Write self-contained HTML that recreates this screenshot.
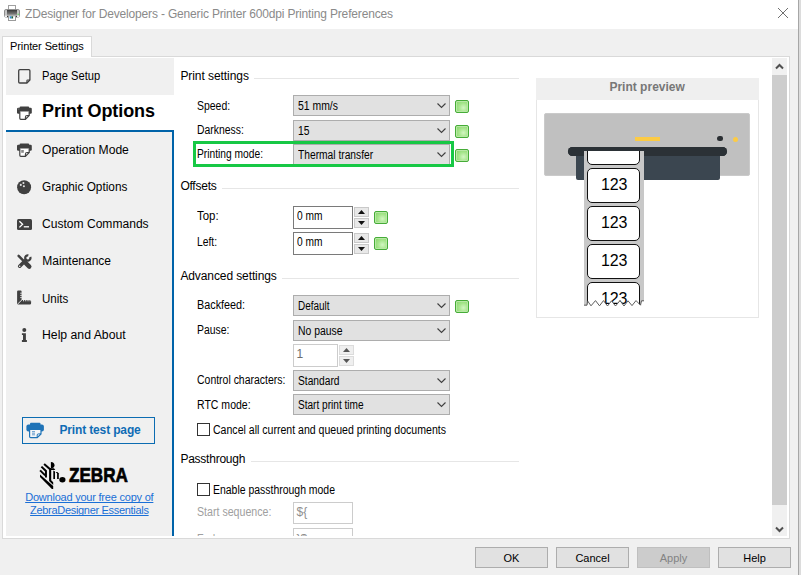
<!DOCTYPE html><html><head><meta charset="utf-8"><style>
html,body{margin:0;padding:0}
body{width:801px;height:575px;overflow:hidden;position:relative;background:#f0f0f0;font-family:"Liberation Sans",sans-serif}
.t{position:absolute;white-space:nowrap;line-height:1;font-family:"Liberation Sans",sans-serif}
svg{position:absolute;overflow:visible}
</style></head><body>
<div style="position:absolute;left:0px;top:0px;width:801px;height:29px;background:#fff"></div>
<div class="t" style="left:25.00px;top:8px;font-size:12px;color:#8a8a8a;letter-spacing:-0.167px;">ZDesigner for Developers - Generic Printer 600dpi Printing Preferences</div>
<svg style="left:4px;top:5px" width="16" height="16" viewBox="0 0 16 16">
<defs><linearGradient id="pg" x1="0" y1="0" x2="0" y2="1"><stop offset="0" stop-color="#3a3a3a"/><stop offset="1" stop-color="#858585"/></linearGradient></defs>
<rect x="4.5" y="0.5" width="7" height="5" fill="#fff" stroke="#a0a0a0"/>
<rect x="0.5" y="4.6" width="15" height="7.6" rx="1.3" fill="#c4c4c4" stroke="#8c8c8c"/>
<rect x="3" y="5" width="10" height="4.8" fill="url(#pg)"/>
<rect x="13.6" y="8.7" width="1.3" height="1.3" fill="#6be06b"/>
<rect x="0.8" y="10.6" width="14.4" height="1.8" fill="#f4f4f4"/>
<rect x="4.5" y="10.8" width="7" height="4.7" fill="#fff" stroke="#9a9a9a"/>
<rect x="5.7" y="11.3" width="1.8" height="2.2" fill="#2a8ad8"/><rect x="7.5" y="11.3" width="1.6" height="2.2" fill="#1e5e3a"/>
<rect x="3" y="10.7" width="0.9" height="1.4" fill="#222"/><rect x="12.1" y="10.7" width="0.9" height="1.4" fill="#222"/>
</svg>
<svg style="left:777px;top:7px" width="12" height="12" viewBox="0 0 12 12"><path d="M1 1L11 11M11 1L1 11" stroke="#707070" stroke-width="1"/></svg>
<div style="position:absolute;left:798px;top:0px;width:1px;height:575px;background:#a6a6a6"></div>
<div style="position:absolute;left:799px;top:0px;width:2px;height:575px;background:#dcdcdc"></div>
<div style="position:absolute;left:2px;top:36px;width:88px;height:20px;background:#fff;border:1px solid #d9d9d9;border-bottom:none"></div>
<div style="position:absolute;left:2px;top:56px;width:786px;height:481px;background:#fff;border:1px solid #d9d9d9"></div>
<div style="position:absolute;left:3px;top:56px;width:88px;height:1px;background:#fff"></div>
<div class="t" style="left:10.00px;top:41px;font-size:11px;color:#000;letter-spacing:-0.103px;">Printer Settings</div>
<div style="position:absolute;left:6px;top:58px;width:168px;height:37px;background:#f0f0f0"></div>
<div style="position:absolute;left:6px;top:130px;width:166px;height:404px;background:#f0f0f0;border-top:2px solid #0063a9;border-right:2px solid #0063a9"></div>
<div class="t" style="left:42.30px;top:70px;font-size:12px;color:#000;transform:scaleX(0.9275);transform-origin:0 0;">Page Setup</div>
<div class="t" style="left:42.30px;top:144px;font-size:12px;color:#000;transform:scaleX(1.0093);transform-origin:0 0;">Operation Mode</div>
<div class="t" style="left:42.30px;top:181px;font-size:12px;color:#000;transform:scaleX(0.9844);transform-origin:0 0;">Graphic Options</div>
<div class="t" style="left:42.30px;top:218px;font-size:12px;color:#000;transform:scaleX(1.0057);transform-origin:0 0;">Custom Commands</div>
<div class="t" style="left:42.30px;top:255px;font-size:12px;color:#000;">Maintenance</div>
<div class="t" style="left:42.30px;top:293px;font-size:12px;color:#000;transform:scaleX(0.9644);transform-origin:0 0;">Units</div>
<div class="t" style="left:42.30px;top:329px;font-size:12px;color:#000;transform:scaleX(1.0192);transform-origin:0 0;">Help and About</div>
<div class="t" style="left:42.00px;top:102px;font-size:18px;color:#000;font-weight:bold;letter-spacing:-0.083px;">Print Options</div>
<svg style="left:16px;top:68px" width="16" height="16" viewBox="0 0 16 16" fill="none" stroke="#404040" stroke-width="1.4">
<path d="M2.7 2.7 Q2.7 1.6 3.8 1.6 H12.8 Q13.9 1.6 13.9 2.7 V12 L10.9 15 H3.8 Q2.7 15 2.7 13.9 Z" stroke-width="1.3"/>
<path d="M10.9 15 V12.8 Q10.9 12 11.7 12 H13.9" stroke-width="1.1"/></svg>
<svg style="left:16px;top:104px" width="17" height="17" viewBox="0 0 17 17">
<rect x="3.6" y="2.4" width="9.6" height="2.4" rx="1" fill="#404040"/>
<rect x="1" y="3.8" width="14.8" height="5.9" rx="1.2" fill="#404040"/>
<path d="M3.8 7.6 V14.3 Q3.8 15.3 4.8 15.3 H9.4 L13.2 11.5 V7.6" fill="#fff" stroke="#404040" stroke-width="1.2"/>
<path d="M9.4 15.3 V13.2 Q9.4 11.5 11.1 11.5 H13.2" fill="none" stroke="#404040" stroke-width="1.1"/>
<rect x="1.8" y="4.6" width="1.6" height="0.9" fill="#7a7a7a"/>
</svg>
<svg style="left:16px;top:141px" width="17" height="17" viewBox="0 0 17 17">
<rect x="3.6" y="2.4" width="9.6" height="2.4" rx="1" fill="#404040"/>
<rect x="1" y="3.8" width="14.8" height="5.9" rx="1.2" fill="#404040"/>
<path d="M3.8 7.6 V14.3 Q3.8 15.3 4.8 15.3 H9.4 L13.2 11.5 V7.6" fill="#fff" stroke="#404040" stroke-width="1.2"/>
<path d="M9.4 15.3 V13.2 Q9.4 11.5 11.1 11.5 H13.2" fill="none" stroke="#404040" stroke-width="1.1"/>
<rect x="5.2" y="9" width="2.6" height="2.8" fill="#8a8a8a"/>
</svg>
<svg style="left:16px;top:179px" width="16" height="16" viewBox="0 0 16 16"><circle cx="8.1" cy="8.3" r="7" fill="#404040"/><circle cx="7.4" cy="4.0" r="1.05" fill="#fff" opacity="0.85"/><circle cx="4.8" cy="5.9" r="1.05" fill="#fff" opacity="0.85"/><circle cx="7.9" cy="7.2" r="1.05" fill="#fff" opacity="0.85"/></svg>
<svg style="left:16px;top:218px" width="17" height="13" viewBox="0 0 17 13"><rect x="1" y="1" width="15" height="11" rx="1.5" fill="#404040"/><path d="M3.4 3.2 L6.6 6.3 L3.4 9.4" fill="none" stroke="#fff" stroke-width="1.3"/><path d="M7.8 8.8 H13" stroke="#fff" stroke-width="1.3"/></svg>
<svg style="left:16px;top:253px" width="17" height="17" viewBox="0 0 17 17" fill="none" stroke="#404040">
<path d="M2.6 2.9 L8.8 9.1" stroke-width="2.5" stroke-linecap="round"/>
<path d="M9.8 10.1 L13.3 13.6" stroke-width="4.4" stroke-linecap="round"/>
<path d="M3.7 13.2 L8.9 8.0" stroke-width="3.6" stroke-linecap="round"/>
<path d="M14.21 4.03 A2.6 2.6 0 1 1 12.34 2.46" stroke-width="2.3"/>
<circle cx="3.7" cy="13.2" r="0.75" fill="#f0f0f0" stroke="none"/>
</svg>
<svg style="left:16px;top:289px" width="17" height="17" viewBox="0 0 17 17">
<path d="M1.1 2.6 Q1.1 1.5 2.2 1.5 H4.6 Q5.6 1.5 5.6 2.5 V11 H14.2 Q15.1 11 15.1 11.9 V14.2 Q15.1 15.4 13.9 15.4 H2.3 Q1.1 15.4 1.1 14.2 Z" fill="#404040"/>
<path d="M5.8 4.2 L4.3 4.2 M5.8 6.4 L4.3 6.4 M5.8 8.6 L4.3 8.6 M7.6 10.8 V12.3 M9.8 10.8 V12.3 M12 10.8 V12.3 M14.1 10.8 V12.3" stroke="#f0f0f0" stroke-width="1"/>
<path d="M1.5 15.2 L6.2 10.6" stroke="#f0f0f0" stroke-width="0.9"/>
</svg>
<svg style="left:16px;top:326px" width="17" height="17" viewBox="0 0 17 17">
<circle cx="8.3" cy="4.1" r="2.0" fill="#404040"/>
<path d="M5.9 7.2 H9.9 V14 H10.9 V16 H5.9 V14 H7 V9 H5.9 Z" fill="#404040"/>
</svg>
<div style="position:absolute;left:174px;top:57px;width:598px;height:479px;overflow:hidden"><div style="position:absolute;left:-174px;top:-57px;width:801px;height:575px">
<div class="t" style="left:180.40px;top:70px;font-size:12px;color:#000;letter-spacing:-0.067px;">Print settings</div>
<div style="position:absolute;left:254px;top:78px;width:265px;height:1px;background:#e6e6e6"></div>
<div class="t" style="left:180.40px;top:180px;font-size:12px;color:#000;letter-spacing:-0.242px;">Offsets</div>
<div style="position:absolute;left:222px;top:188px;width:297px;height:1px;background:#e6e6e6"></div>
<div class="t" style="left:180.40px;top:270px;font-size:12px;color:#000;letter-spacing:-0.102px;">Advanced settings</div>
<div style="position:absolute;left:282px;top:278px;width:237px;height:1px;background:#e6e6e6"></div>
<div class="t" style="left:180.40px;top:453px;font-size:12px;color:#000;letter-spacing:-0.237px;">Passthrough</div>
<div style="position:absolute;left:251px;top:461px;width:268px;height:1px;background:#e6e6e6"></div>
<div class="t" style="left:197.30px;top:100px;font-size:12px;color:#000;transform:scaleX(0.8711);transform-origin:0 0;">Speed:</div>
<div style="position:absolute;left:293px;top:95px;width:155px;height:19px;background:#e1e1e1;border:1px solid #adadad"></div>
<div class="t" style="left:297.50px;top:100px;font-size:12px;color:#000;transform:scaleX(0.8674);transform-origin:0 0;">51 mm/s</div>
<svg style="left:437px;top:103px" width="9" height="6" viewBox="0 0 9 6"><path d="M0.5 0.5L4.5 4.5L8.5 0.5" fill="none" stroke="#404040" stroke-width="1.1"/></svg>
<div style="position:absolute;left:455px;top:100px;width:12px;height:11px;border:1px solid #46ac38;border-radius:2px;background:radial-gradient(circle at 62% 62%,#d2f6c2 0,#a6e58c 45%,#7fd361 100%);box-shadow:inset 0 0 0 1px #b8e8a6"></div>
<div class="t" style="left:197.30px;top:124px;font-size:12px;color:#000;transform:scaleX(0.8667);transform-origin:0 0;">Darkness:</div>
<div style="position:absolute;left:293px;top:120px;width:155px;height:19px;background:#e1e1e1;border:1px solid #adadad"></div>
<div class="t" style="left:297.50px;top:125px;font-size:12px;color:#000;transform:scaleX(0.8598);transform-origin:0 0;">15</div>
<svg style="left:437px;top:128px" width="9" height="6" viewBox="0 0 9 6"><path d="M0.5 0.5L4.5 4.5L8.5 0.5" fill="none" stroke="#404040" stroke-width="1.1"/></svg>
<div style="position:absolute;left:455px;top:125px;width:12px;height:11px;border:1px solid #46ac38;border-radius:2px;background:radial-gradient(circle at 62% 62%,#d2f6c2 0,#a6e58c 45%,#7fd361 100%);box-shadow:inset 0 0 0 1px #b8e8a6"></div>
<div class="t" style="left:197.30px;top:148px;font-size:12px;color:#000;transform:scaleX(0.8530);transform-origin:0 0;">Printing mode:</div>
<div style="position:absolute;left:293px;top:144px;width:155px;height:19px;background:#e1e1e1;border:1px solid #adadad"></div>
<div class="t" style="left:297.50px;top:149px;font-size:12px;color:#000;transform:scaleX(0.8534);transform-origin:0 0;">Thermal transfer</div>
<svg style="left:437px;top:152px" width="9" height="6" viewBox="0 0 9 6"><path d="M0.5 0.5L4.5 4.5L8.5 0.5" fill="none" stroke="#404040" stroke-width="1.1"/></svg>
<div style="position:absolute;left:455px;top:149px;width:12px;height:11px;border:1px solid #46ac38;border-radius:2px;background:radial-gradient(circle at 62% 62%,#d2f6c2 0,#a6e58c 45%,#7fd361 100%);box-shadow:inset 0 0 0 1px #b8e8a6"></div>
<div style="position:absolute;left:193px;top:141px;width:255px;height:20px;border:3px solid #17c845"></div>
<div class="t" style="left:197.30px;top:210px;font-size:12px;color:#000;transform:scaleX(0.9503);transform-origin:0 0;">Top:</div>
<div style="position:absolute;left:293px;top:206px;width:58px;height:21px;background:#fff;border:1px solid #7a7a7a"></div>
<div class="t" style="left:296.50px;top:210px;font-size:12px;color:#000;transform:scaleX(0.8500);transform-origin:0 0;">0 mm</div>
<div style="position:absolute;left:354px;top:207px;width:15px;height:10px;background:#e8e8e8;border:1px solid #c9c9c9;box-sizing:border-box"></div>
<div style="position:absolute;left:354px;top:218px;width:15px;height:10px;background:#e8e8e8;border:1px solid #c9c9c9;box-sizing:border-box"></div>
<svg style="left:358px;top:210px" width="7" height="4" viewBox="0 0 7 4"><path d="M0 4L3.5 0L7 4Z" fill="#111"/></svg>
<svg style="left:358px;top:221px" width="7" height="4" viewBox="0 0 7 4"><path d="M0 0L3.5 4L7 0Z" fill="#111"/></svg>
<div style="position:absolute;left:374px;top:211px;width:12px;height:11px;border:1px solid #46ac38;border-radius:2px;background:radial-gradient(circle at 62% 62%,#d2f6c2 0,#a6e58c 45%,#7fd361 100%);box-shadow:inset 0 0 0 1px #b8e8a6"></div>
<div class="t" style="left:197.30px;top:236px;font-size:12px;color:#000;transform:scaleX(0.8599);transform-origin:0 0;">Left:</div>
<div style="position:absolute;left:293px;top:232px;width:58px;height:21px;background:#fff;border:1px solid #7a7a7a"></div>
<div class="t" style="left:296.50px;top:236px;font-size:12px;color:#000;transform:scaleX(0.8500);transform-origin:0 0;">0 mm</div>
<div style="position:absolute;left:354px;top:233px;width:15px;height:10px;background:#e8e8e8;border:1px solid #c9c9c9;box-sizing:border-box"></div>
<div style="position:absolute;left:354px;top:244px;width:15px;height:10px;background:#e8e8e8;border:1px solid #c9c9c9;box-sizing:border-box"></div>
<svg style="left:358px;top:236px" width="7" height="4" viewBox="0 0 7 4"><path d="M0 4L3.5 0L7 4Z" fill="#111"/></svg>
<svg style="left:358px;top:247px" width="7" height="4" viewBox="0 0 7 4"><path d="M0 0L3.5 4L7 0Z" fill="#111"/></svg>
<div style="position:absolute;left:374px;top:237px;width:12px;height:11px;border:1px solid #46ac38;border-radius:2px;background:radial-gradient(circle at 62% 62%,#d2f6c2 0,#a6e58c 45%,#7fd361 100%);box-shadow:inset 0 0 0 1px #b8e8a6"></div>
<div class="t" style="left:197.30px;top:299px;font-size:12px;color:#000;transform:scaleX(0.9012);transform-origin:0 0;">Backfeed:</div>
<div style="position:absolute;left:293px;top:295px;width:155px;height:19px;background:#e1e1e1;border:1px solid #adadad"></div>
<div class="t" style="left:297.50px;top:300px;font-size:12px;color:#000;transform:scaleX(0.8289);transform-origin:0 0;">Default</div>
<svg style="left:437px;top:303px" width="9" height="6" viewBox="0 0 9 6"><path d="M0.5 0.5L4.5 4.5L8.5 0.5" fill="none" stroke="#404040" stroke-width="1.1"/></svg>
<div style="position:absolute;left:455px;top:300px;width:12px;height:11px;border:1px solid #46ac38;border-radius:2px;background:radial-gradient(circle at 62% 62%,#d2f6c2 0,#a6e58c 45%,#7fd361 100%);box-shadow:inset 0 0 0 1px #b8e8a6"></div>
<div class="t" style="left:197.30px;top:324px;font-size:12px;color:#000;transform:scaleX(0.8669);transform-origin:0 0;">Pause:</div>
<div style="position:absolute;left:293px;top:320px;width:155px;height:19px;background:#e1e1e1;border:1px solid #adadad"></div>
<div class="t" style="left:297.50px;top:325px;font-size:12px;color:#000;transform:scaleX(0.8662);transform-origin:0 0;">No pause</div>
<svg style="left:437px;top:328px" width="9" height="6" viewBox="0 0 9 6"><path d="M0.5 0.5L4.5 4.5L8.5 0.5" fill="none" stroke="#404040" stroke-width="1.1"/></svg>
<div style="position:absolute;left:293px;top:344px;width:43px;height:21px;background:#fff;border:1px solid #cccccc"></div>
<div class="t" style="left:296.50px;top:348px;font-size:12px;color:#6d6d6d;">1</div>
<div style="position:absolute;left:339px;top:345px;width:15px;height:10px;background:#efefef;border:1px solid #dcdcdc;box-sizing:border-box"></div>
<div style="position:absolute;left:339px;top:356px;width:15px;height:10px;background:#efefef;border:1px solid #dcdcdc;box-sizing:border-box"></div>
<svg style="left:343px;top:348px" width="7" height="4" viewBox="0 0 7 4"><path d="M0 4L3.5 0L7 4Z" fill="#555"/></svg>
<svg style="left:343px;top:359px" width="7" height="4" viewBox="0 0 7 4"><path d="M0 0L3.5 4L7 0Z" fill="#555"/></svg>
<div class="t" style="left:197.30px;top:374px;font-size:12px;color:#000;transform:scaleX(0.8720);transform-origin:0 0;">Control characters:</div>
<div style="position:absolute;left:293px;top:370px;width:155px;height:19px;background:#e1e1e1;border:1px solid #adadad"></div>
<div class="t" style="left:297.50px;top:375px;font-size:12px;color:#000;transform:scaleX(0.8513);transform-origin:0 0;">Standard</div>
<svg style="left:437px;top:378px" width="9" height="6" viewBox="0 0 9 6"><path d="M0.5 0.5L4.5 4.5L8.5 0.5" fill="none" stroke="#404040" stroke-width="1.1"/></svg>
<div class="t" style="left:197.30px;top:399px;font-size:12px;color:#000;transform:scaleX(0.8769);transform-origin:0 0;">RTC mode:</div>
<div style="position:absolute;left:293px;top:394px;width:155px;height:19px;background:#e1e1e1;border:1px solid #adadad"></div>
<div class="t" style="left:297.50px;top:399px;font-size:12px;color:#000;transform:scaleX(0.8397);transform-origin:0 0;">Start print time</div>
<svg style="left:437px;top:402px" width="9" height="6" viewBox="0 0 9 6"><path d="M0.5 0.5L4.5 4.5L8.5 0.5" fill="none" stroke="#404040" stroke-width="1.1"/></svg>
<div style="position:absolute;left:197px;top:423px;width:11px;height:11px;background:#fff;border:1px solid #333"></div>
<div class="t" style="left:213.00px;top:424px;font-size:12px;color:#000;transform:scaleX(0.8797);transform-origin:0 0;">Cancel all current and queued printing documents</div>
<div style="position:absolute;left:197px;top:483px;width:11px;height:11px;background:#fff;border:1px solid #333"></div>
<div class="t" style="left:213.00px;top:484px;font-size:12px;color:#000;transform:scaleX(0.8707);transform-origin:0 0;">Enable passthrough mode</div>
<div class="t" style="left:197.30px;top:506px;font-size:12px;color:#a0a0a0;transform:scaleX(0.8857);transform-origin:0 0;">Start sequence:</div>
<div style="position:absolute;left:293px;top:502px;width:58px;height:20px;background:#fff;border:1px solid #cccccc"></div>
<div class="t" style="left:296.50px;top:506px;font-size:12px;color:#909090;">${</div>
<div style="position:absolute;left:293px;top:528px;width:58px;height:20px;background:#fff;border:1px solid #cccccc"></div>
<div class="t" style="left:296.50px;top:533px;font-size:12px;color:#909090;">}$</div>
<div class="t" style="left:197.30px;top:533px;font-size:12px;color:#a0a0a0;transform:scaleX(0.8449);transform-origin:0 0;">End sequence:</div>
<div style="position:absolute;left:536px;top:78px;width:221px;height:238px;background:#fff;border:1px solid #e6e6e6"></div>
<div style="position:absolute;left:536px;top:78px;width:223px;height:22px;background:#efefef"></div>
<div class="t" style="left:609.40px;top:81px;font-size:12px;color:#777;font-weight:bold;letter-spacing:0.010px;">Print preview</div>
<div style="position:absolute;left:544px;top:113px;width:206px;height:63px;background:#c0c0c0;border:1px solid #cacaca;border-radius:2px;box-sizing:border-box"></div>
<div style="position:absolute;left:635px;top:137px;width:25px;height:4px;background:#fccb45"></div>
<div style="position:absolute;left:717px;top:136px;width:6px;height:5px;background:#2b2f33;border-radius:3px 2.5px 2.5px 3px"></div>
<div style="position:absolute;left:732.5px;top:136.5px;width:5px;height:5px;background:#fccb45;border-radius:2.5px"></div>
<div style="position:absolute;left:576px;top:155px;width:144px;height:25px;background:#3b4650;border-radius:0 0 2px 2px"></div>
<div style="position:absolute;left:568px;top:147px;width:159px;height:9px;background:#2b3136;border-radius:5px"></div>
<div style="position:absolute;left:584px;top:151px;width:60px;height:154px;background:#c8c8c8"></div>
<div style="position:absolute;left:584px;top:151px;width:60px;height:154px;overflow:hidden">
<div style="position:absolute;left:3px;top:-21px;width:51px;height:33px;background:#fff;border:1.5px solid #111;border-radius:5px"></div>
<div style="position:absolute;left:3px;top:17px;width:51px;height:33px;background:#fff;border:1.5px solid #111;border-radius:5px"></div>
<div class="t" style="left:17px;top:26px;font-size:16px;color:#000;letter-spacing:-0.2px">123</div>
<div style="position:absolute;left:3px;top:55px;width:51px;height:33px;background:#fff;border:1.5px solid #111;border-radius:5px"></div>
<div class="t" style="left:17px;top:64px;font-size:16px;color:#000;letter-spacing:-0.2px">123</div>
<div style="position:absolute;left:3px;top:93px;width:51px;height:33px;background:#fff;border:1.5px solid #111;border-radius:5px"></div>
<div class="t" style="left:17px;top:102px;font-size:16px;color:#000;letter-spacing:-0.2px">123</div>
<div style="position:absolute;left:3px;top:131px;width:51px;height:33px;background:#fff;border:1.5px solid #111;border-radius:5px"></div>
<div class="t" style="left:17px;top:140px;font-size:16px;color:#000;letter-spacing:-0.2px">123</div>
</div>
<div style="position:absolute;left:568px;top:147px;width:16px;height:9px;background:#2b3136;border-radius:5px 0 0 5px"></div>
<div style="position:absolute;left:644px;top:147px;width:83px;height:9px;background:#2b3136;border-radius:0 5px 5px 0"></div>
<svg style="left:584px;top:299px" width="60" height="10" viewBox="0 0 60 10"><path d="M0 6.2 L3 6.2 L3.5 1.8 L7 6.8 L11.5 1.6 L15.5 6.8 L19.5 1.6 L23.5 7 L27.5 1.8 L31.5 7 L36 1.6 L40 7 L44 1.8 L48 6.6 L52 1.6 L56.5 6.2 L57.5 1.8 L60 1.8 L60 10 L0 10Z" fill="#fff"/><path d="M0 6.2 L3 6.2 L3.5 1.8 L7 6.8 L11.5 1.6 L15.5 6.8 L19.5 1.6 L23.5 7 L27.5 1.8 L31.5 7 L36 1.6 L40 7 L44 1.8 L48 6.6 L52 1.6 L56.5 6.2 L57.5 1.8 L60 1.8" fill="none" stroke="#4a4a4a" stroke-width="0.9"/></svg>
</div></div>
<div style="position:absolute;left:772px;top:58px;width:15px;height:478px;background:#f0f0f0"></div>
<div style="position:absolute;left:772px;top:75px;width:15px;height:430px;background:#cdcdcd"></div>
<svg style="left:775px;top:63px" width="9" height="7" viewBox="0 0 9 7"><path d="M1 5.5L4.5 2L8 5.5" fill="none" stroke="#505050" stroke-width="2"/></svg>
<svg style="left:775px;top:526px" width="9" height="7" viewBox="0 0 9 7"><path d="M1 1.5L4.5 5L8 1.5" fill="none" stroke="#505050" stroke-width="2"/></svg>
<div style="position:absolute;left:22px;top:417px;width:131px;height:25px;border:1px solid #0b6cb2"></div>
<div class="t" style="left:59.40px;top:424px;font-size:12px;color:#0f6cb5;font-weight:bold;letter-spacing:-0.141px;">Print test page</div>
<svg style="left:22px;top:417px" width="28" height="28" viewBox="0 0 28 28">
<rect x="8" y="5.8" width="10.5" height="3" rx="1" fill="#1f73b7"/>
<rect x="4.4" y="7.6" width="17.5" height="7" rx="2" fill="#1f73b7"/>
<path d="M7.6 13 V19.6 Q7.6 20.7 8.7 20.7 H15.2 L19 16.9 V13" fill="#f4f6f8" stroke="#1f73b7" stroke-width="1.2"/>
<path d="M15.2 20.7 V18 Q15.2 16.9 16.3 16.9 H19" fill="none" stroke="#1f73b7" stroke-width="1"/>
<path d="M10 14.6 H13 M10 16.2 H13 M10 17.8 H13" stroke="#5b95c9" stroke-width="0.9"/>
</svg>
<svg style="left:36px;top:458px" width="34" height="34" viewBox="36 458 34 34">
<g fill="#000">
<path d="M40 474.6 L40 477.1 L51.9 488.9 L53.2 488.9 L53.2 486.1 Z"/>
<path d="M49.1 468.2 L51.2 468.2 L51.2 480.2 L53.2 482.2 L53.2 484.9 L49.1 480.9 Z"/>
<path d="M50.9 461.9 C53.4 461.9 54.5 463.5 54.5 465.2 C54.5 467 53.2 468.2 51.4 468.3 L50.9 468.3 Z"/>
<path d="M49.5 468.2 L54 468.2 L55.3 469.9 L49.5 469.9 Z"/>
<path d="M53.3 470.6 L55 471.6 L55 479 L53.3 479 Z"/>
<path d="M55.6 471.9 L57.3 471.9 L59.3 473.8 L58.8 473.8 L58.8 479 L57.1 479 L57.1 473.6 Z"/>
<ellipse cx="62.4" cy="479.7" rx="3.1" ry="2.75"/>
</g>
<g fill="none" stroke="#000" stroke-width="2">
<path d="M44.1 463.9 L50.1 469.3"/>
<path d="M41.4 466.6 L45.95 471.0 L45.95 477.5" stroke-linejoin="miter"/>
<path d="M40.1 470.4 L45.2 475.4"/>
</g></svg>
<div class="t" style="left:69.30px;top:465px;font-size:20px;color:#000;font-weight:bold;transform:scaleX(0.8552);transform-origin:0 0;-webkit-text-stroke:0.7px #000;">ZEBRA</div>
<div class="t" style="left:25.20px;top:492px;font-size:11px;color:#1a6fd6;letter-spacing:-0.220px;text-decoration:underline;text-decoration-skip-ink:none;">Download your free copy of</div>
<div class="t" style="left:30.10px;top:505px;font-size:11px;color:#1a6fd6;letter-spacing:-0.309px;text-decoration:underline;text-decoration-skip-ink:none;">ZebraDesigner Essentials</div>
<div style="position:absolute;left:475px;top:547px;width:71px;height:19px;background:#e1e1e1;border:1px solid #adadad"></div>
<div class="t" style="left:503.56px;top:553px;font-size:11px;color:#000;">OK</div>
<div style="position:absolute;left:556px;top:547px;width:71px;height:19px;background:#e1e1e1;border:1px solid #adadad"></div>
<div class="t" style="left:575.38px;top:553px;font-size:11px;color:#000;">Cancel</div>
<div style="position:absolute;left:637px;top:547px;width:71px;height:19px;background:#cccccc;border:1px solid #bfbfbf"></div>
<div class="t" style="left:659.75px;top:553px;font-size:11px;color:#838383;">Apply</div>
<div style="position:absolute;left:718px;top:547px;width:71px;height:19px;background:#e1e1e1;border:1px solid #adadad"></div>
<div class="t" style="left:743.19px;top:553px;font-size:11px;color:#000;">Help</div>
</body></html>
